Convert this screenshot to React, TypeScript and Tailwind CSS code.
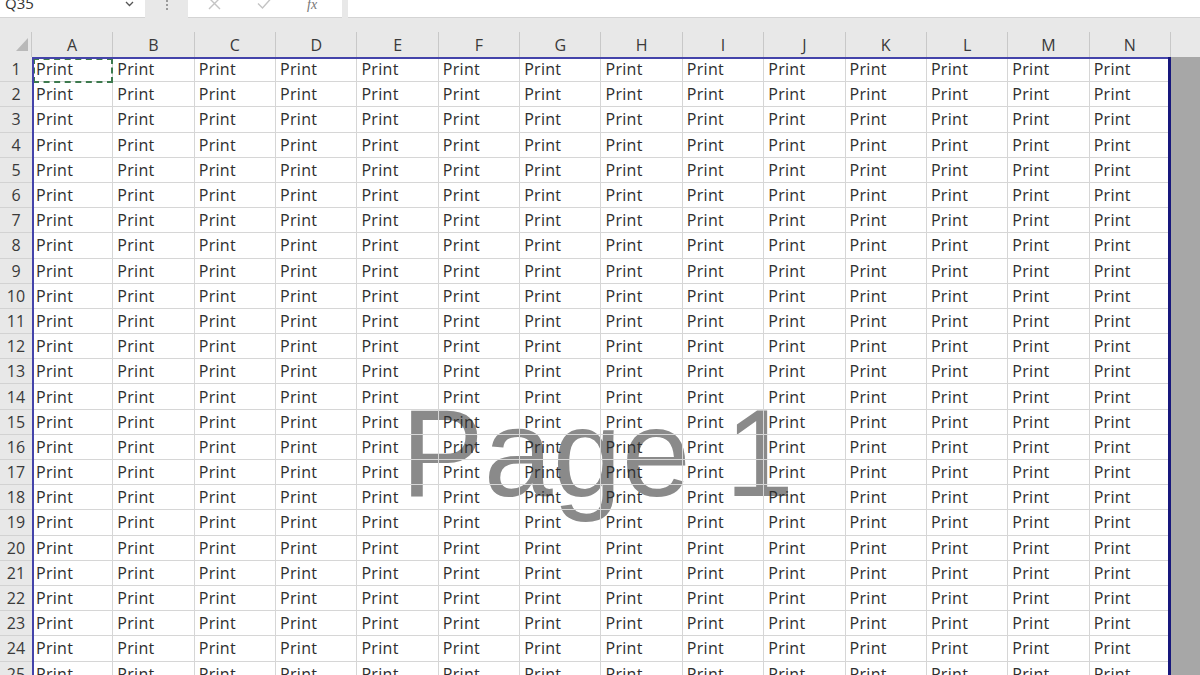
import React from 'react';

const COLS = ['A', 'B', 'C', 'D', 'E', 'F', 'G', 'H', 'I', 'J', 'K', 'L', 'M', 'N'];
const ROWS = Array.from({ length: 26 }, (_, i) => i + 1);

const FormulaBar = () => (
    <div className="-mt-[10px] h-[28px] flex">
        <div className="w-[145px] bg-white border-b border-[#d4d4d4] flex items-center justify-between pl-[5px] pr-[11px]">
            <span className="text-[15px] text-[#333]">Q35</span>
            <svg width="9" height="6" viewBox="0 0 9 6">
                <path d="M1 1 L4.5 4.5 L8 1" fill="none" stroke="#555" strokeWidth="1.3" />
            </svg>
        </div>
        <div className="w-[43px] flex flex-col items-center justify-center gap-[2px] pt-[2px]">
            <span className="block w-[2px] h-[2px] bg-[#9a9a9a]" />
            <span className="block w-[2px] h-[2px] bg-[#9a9a9a]" />
            <span className="block w-[2px] h-[2px] bg-[#9a9a9a]" />
        </div>
        <div className="w-[154px] bg-white border-b border-[#d4d4d4] relative">
            <svg className="absolute left-[20px] top-[7px]" width="13" height="13" viewBox="0 0 13 13">
                <path d="M1 1 L12 12 M12 1 L1 12" stroke="#c4c4c4" strokeWidth="1.4" />
            </svg>
            <svg className="absolute left-[69px] top-[7px]" width="15" height="13" viewBox="0 0 15 13">
                <path d="M1 6.5 L5.5 11 L14 1.5" fill="none" stroke="#c4c4c4" strokeWidth="1.4" />
            </svg>
            <span className="absolute left-[119px] top-[4px] text-[14px] italic font-['Liberation_Serif',serif] text-[#777]">
                fx
            </span>
        </div>
        <div className="w-[6px]" />
        <div className="flex-1 bg-white border-b border-[#d4d4d4]" />
    </div>
);

const HeaderRow = () => (
    <div className="h-[25px] flex">
        <div className="w-[32px] relative border-r border-[#c8c8c8]">
            <svg className="absolute left-[16px] top-[6px]" width="12" height="13" viewBox="0 0 12 13">
                <path d="M12 0 L12 13 L0 13 Z" fill="#b9b9b9" />
            </svg>
        </div>
        <div className="w-[1139px] grid grid-cols-[repeat(14,minmax(0,1fr))]">
            {COLS.map(c => (
                <div key={c} className="flex items-center justify-center border-r border-[#c8c8c8] text-[16px] text-[#3a3a3a]">
                    {c}
                </div>
            ))}
        </div>
        <div className="flex-1" />
    </div>
);

export default function App() {
    return (
        <div className="w-[1200px] h-[675px] overflow-hidden bg-[#e8e8e8] font-['Open_Sans',sans-serif]">
            <FormulaBar />
            <div className="h-[14px]" />
            <HeaderRow />

            <div className="flex h-[618px]">
                {/* row numbers */}
                <div className="w-[32px] flex flex-col">
                    {ROWS.map(r => (
                        <div key={r} className="h-[25.2px] shrink-0 flex items-center justify-center border-b border-[#d2d2d2] text-[16px] text-[#3a3a3a]">
                            {r}
                        </div>
                    ))}
                </div>

                {/* print area */}
                <div className="relative w-[1139px] bg-white overflow-hidden">
                    <div className="absolute left-[369px] top-[334px] text-[124px] leading-none whitespace-nowrap text-[#8a8a8a] font-['Liberation_Sans',Arial,sans-serif]">
                        Page 1
                    </div>

                    <div className="relative flex flex-col">
                        {ROWS.map(r => (
                            <div key={r} className="h-[25.2px] shrink-0 grid grid-cols-[repeat(14,minmax(0,1fr))]">
                                {COLS.map(c => (
                                    <div key={c} className="flex items-center pl-[4px] border-r border-b border-[#d6d6d6] text-[16px] tracking-[0.3px] text-[#2e2e2e]">
                                        Print
                                    </div>
                                ))}
                            </div>
                        ))}
                    </div>

                    {/* copy marquee on A1 */}
                    <div className="absolute left-[1px] top-[1px] w-[80px] h-[25px] border-2 border-dashed border-[#3d7a4e]" />

                    {/* page break lines */}
                    <div className="absolute left-0 right-0 top-0 h-[2px] bg-[#4444aa]" />
                    <div className="absolute left-0 top-0 bottom-0 w-[2px] bg-[#4444aa]" />
                    <div className="absolute right-0 top-0 bottom-0 w-[3px] bg-[#17177c]" />
                </div>

                <div className="flex-1 bg-[#a7a7a7]" />
            </div>
        </div>
    );
}
